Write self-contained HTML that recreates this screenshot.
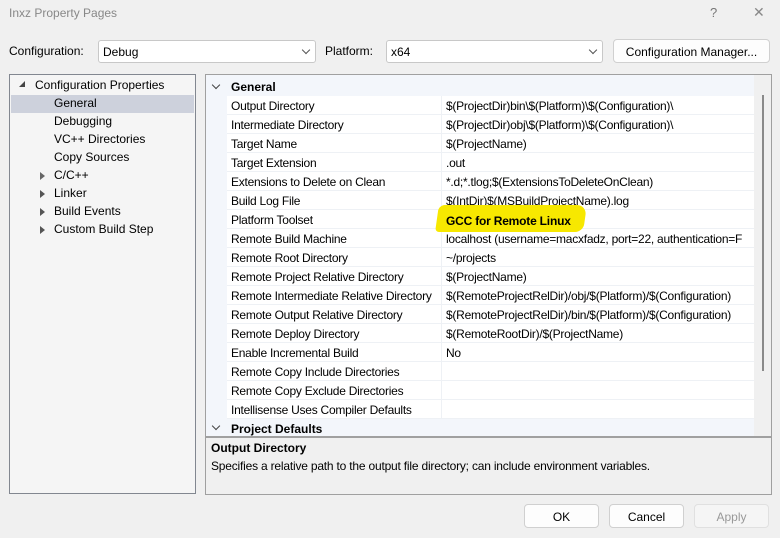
<!DOCTYPE html>
<html><head><style>
*{box-sizing:border-box;margin:0;padding:0}
body{width:780px;height:538px;background:#f0f0f0;font-family:"Liberation Sans",sans-serif;font-size:12px;color:#000;position:relative;overflow:hidden}
.a{position:absolute;white-space:nowrap}
.combo{position:absolute;height:23px;background:#fff;border:1px solid #c8c8c8;border-radius:3px;padding:4px 0 0 4px}
.chev{position:absolute;right:6px;top:6px;width:6px;height:6px;border-right:1px solid #555;border-bottom:1px solid #555;transform:rotate(45deg)}
.btn{position:absolute;height:24px;background:#fdfdfd;border:1px solid #d0d0d0;border-radius:4px;text-align:center;padding-top:5px}
.tree{position:absolute;left:9px;top:74px;width:187px;height:420px;background:#f5f5f5;border:1px solid #828790}
.grid{position:absolute;left:205px;top:74px;width:567px;height:363px;background:#f3f6fb;border:1px solid #a0a0a0;overflow:hidden}
.row{position:absolute;left:21px;width:527px;height:19px;background:#fff;border-bottom:1px solid #eef1f5;letter-spacing:-0.25px}
.row .n{position:absolute;left:4px;top:3px;white-space:nowrap}
.row .v{position:absolute;left:219px;top:3px;white-space:nowrap}
.row .sep{position:absolute;left:214px;top:0;width:1px;height:19px;background:#eef1f5}
.tri{position:absolute;width:0;height:0;border-top:4px solid transparent;border-bottom:4px solid transparent;border-left:5px solid #555}
</style></head><body>
<div class="a" style="left:9px;top:6px;color:#888;font-size:12px">Inxz Property Pages</div>
<div class="a" style="left:710px;top:5px;color:#777;font-size:13px">?</div>
<div class="a" style="left:753px;top:4px;color:#888;font-size:14px">✕</div>

<div class="a" style="left:9px;top:44px">Configuration:</div>
<div class="combo" style="left:98px;top:40px;width:218px">Debug<div class="chev"></div></div>
<div class="a" style="left:325px;top:44px">Platform:</div>
<div class="combo" style="left:386px;top:40px;width:217px">x64<div class="chev"></div></div>
<div class="btn" style="left:613px;top:39px;width:157px">Configuration Manager...</div>

<div class="tree">
 <div class="a" style="left:9px;top:6px;width:0;height:0;border-left:6px solid transparent;border-bottom:6px solid #444"></div>
 <div class="a" style="left:25px;top:3px">Configuration Properties</div>
 <div class="a" style="left:1px;top:20px;width:183px;height:18px;background:#cdd1dc"></div>
 <div class="a" style="left:44px;top:21px">General</div>
 <div class="a" style="left:44px;top:39px">Debugging</div>
 <div class="a" style="left:44px;top:57px">VC++ Directories</div>
 <div class="a" style="left:44px;top:75px">Copy Sources</div>
 <div class="tri" style="left:30px;top:97px;border-left-color:#666"></div><div class="a" style="left:44px;top:93px">C/C++</div>
 <div class="tri" style="left:30px;top:115px"></div><div class="a" style="left:44px;top:111px">Linker</div>
 <div class="tri" style="left:30px;top:133px"></div><div class="a" style="left:44px;top:129px">Build Events</div>
 <div class="tri" style="left:30px;top:151px"></div><div class="a" style="left:44px;top:147px">Custom Build Step</div>
</div>

<div class="grid">
 <div class="a" style="left:7px;top:7px;width:6px;height:6px;border-right:1px solid #444;border-bottom:1px solid #444;transform:rotate(45deg)"></div>
 <div class="a" style="left:25px;top:5px;font-weight:bold">General</div>
 <div class="row" style="top:21px"><div class="n">Output Directory</div><div class="sep"></div><div class="v">$(ProjectDir)bin\$(Platform)\$(Configuration)\</div></div>
 <div class="row" style="top:40px"><div class="n">Intermediate Directory</div><div class="sep"></div><div class="v">$(ProjectDir)obj\$(Platform)\$(Configuration)\</div></div>
 <div class="row" style="top:59px"><div class="n">Target Name</div><div class="sep"></div><div class="v">$(ProjectName)</div></div>
 <div class="row" style="top:78px"><div class="n">Target Extension</div><div class="sep"></div><div class="v">.out</div></div>
 <div class="row" style="top:97px"><div class="n">Extensions to Delete on Clean</div><div class="sep"></div><div class="v">*.d;*.tlog;$(ExtensionsToDeleteOnClean)</div></div>
 <div class="row" style="top:116px"><div class="n">Build Log File</div><div class="sep"></div><div class="v">$(IntDir)$(MSBuildProjectName).log</div></div>
 <div class="row" style="top:135px"><div class="n">Platform Toolset</div><div class="sep"></div></div>
 <div class="row" style="top:154px"><div class="n">Remote Build Machine</div><div class="sep"></div><div class="v">localhost (username=macxfadz, port=22, authentication=F</div></div>
 <div class="row" style="top:173px"><div class="n">Remote Root Directory</div><div class="sep"></div><div class="v">~/projects</div></div>
 <div class="row" style="top:192px"><div class="n">Remote Project Relative Directory</div><div class="sep"></div><div class="v">$(ProjectName)</div></div>
 <div class="row" style="top:211px"><div class="n">Remote Intermediate Relative Directory</div><div class="sep"></div><div class="v">$(RemoteProjectRelDir)/obj/$(Platform)/$(Configuration)</div></div>
 <div class="row" style="top:230px"><div class="n">Remote Output Relative Directory</div><div class="sep"></div><div class="v">$(RemoteProjectRelDir)/bin/$(Platform)/$(Configuration)</div></div>
 <div class="row" style="top:249px"><div class="n">Remote Deploy Directory</div><div class="sep"></div><div class="v">$(RemoteRootDir)/$(ProjectName)</div></div>
 <div class="row" style="top:268px"><div class="n">Enable Incremental Build</div><div class="sep"></div><div class="v">No</div></div>
 <div class="row" style="top:287px"><div class="n">Remote Copy Include Directories</div><div class="sep"></div></div>
 <div class="row" style="top:306px"><div class="n">Remote Copy Exclude Directories</div><div class="sep"></div></div>
 <div class="row" style="top:325px"><div class="n">Intellisense Uses Compiler Defaults</div><div class="sep"></div></div>
 <div class="a" style="left:231px;top:130px;width:148px;height:27px;background:#f7e800;border-radius:6px 10px 8px 4px;transform:skewX(-8deg)"></div>
 <div class="a" style="left:240px;top:139px;font-weight:bold;letter-spacing:-0.2px">GCC for Remote Linux</div>
 <div class="a" style="left:7px;top:348px;width:6px;height:6px;border-right:1px solid #444;border-bottom:1px solid #444;transform:rotate(45deg)"></div>
 <div class="a" style="left:25px;top:347px;font-weight:bold">Project Defaults</div>
 <div class="a" style="left:548px;top:0;width:18px;height:363px;background:#f0f0f0"></div>
 <div class="a" style="left:556px;top:20px;width:2px;height:276px;background:#8a8a8a"></div>
</div>

<div class="a" style="left:205px;top:437px;width:567px;height:58px;border:1px solid #a0a0a0;background:#f0f0f0"></div>
<div class="a" style="left:211px;top:441px;font-weight:bold">Output Directory</div>
<div class="a" style="left:211px;top:459px;letter-spacing:-0.2px">Specifies a relative path to the output file directory; can include environment variables.</div>

<div class="btn" style="left:524px;top:504px;width:75px">OK</div>
<div class="btn" style="left:609px;top:504px;width:75px">Cancel</div>
<div class="btn" style="left:694px;top:504px;width:75px;color:#999;background:#f5f5f5;border-color:#e0e0e0">Apply</div>
</body></html>
